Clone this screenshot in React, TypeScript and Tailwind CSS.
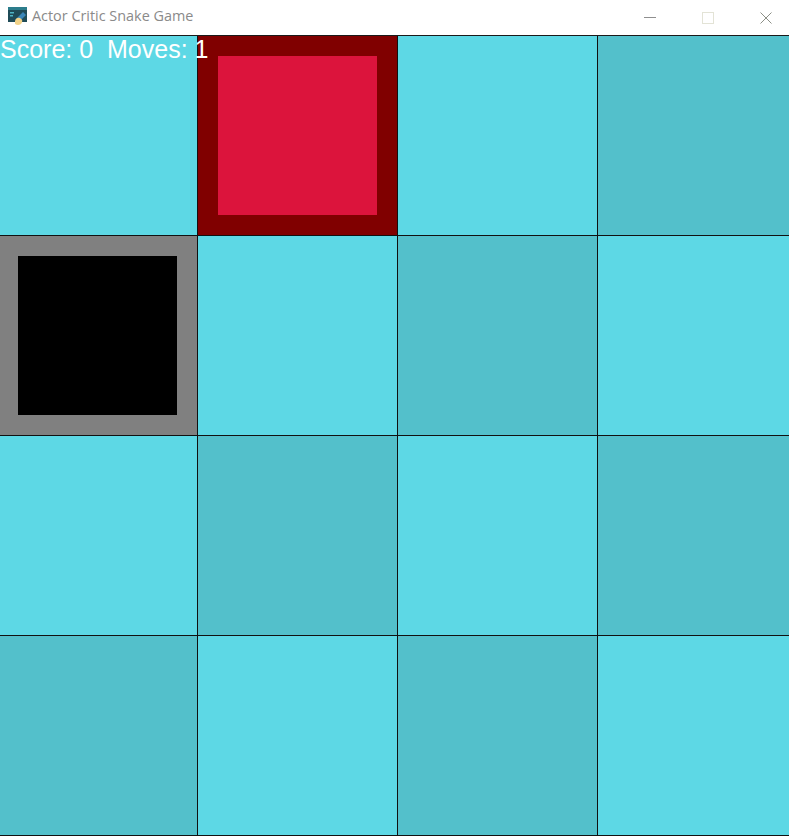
import React from "react";

const ROWS = 4;
const COLS = 4;

type CellKind = "empty" | "head" | "food";

const special: Record<string, CellKind> = {
  "0-1": "head",
  "1-0": "food",
};

function Cell({ row, col }: { row: number; col: number }) {
  const kind = special[`${row}-${col}`] ?? "empty";
  const dark = (row + col) % 2 === 1;

  if (kind === "head") {
    return (
      <div className="flex h-[200px] w-[200px] shrink-0 items-center justify-center border-r border-b border-[#111] bg-[#800000]">
        <div className="h-[159px] w-[159px] bg-[#dc143c]" />
      </div>
    );
  }
  if (kind === "food") {
    return (
      <div className="flex h-[200px] w-[200px] shrink-0 items-center justify-center border-r border-b border-[#111] bg-[#808080]">
        <div className="h-[159px] w-[159px] bg-black" />
      </div>
    );
  }
  return (
    <div
      className={
        dark
          ? "h-[200px] w-[200px] shrink-0 border-r border-b border-[#111] bg-[#53c0cb]"
          : "h-[200px] w-[200px] shrink-0 border-r border-b border-[#111] bg-[#5dd8e5]"
      }
    />
  );
}

function AppIcon() {
  return (
    <svg width="20" height="20" viewBox="0 0 20 20">
      <rect x="0" y="1" width="19" height="15" fill="#1f4b57" />
      <rect x="0" y="1" width="19" height="3" fill="#2c7d8c" />
      <rect x="2" y="6" width="4" height="1.5" fill="#4fb3c4" />
      <rect x="2" y="9" width="3" height="1.5" fill="#4fb3c4" />
      <path d="M9 12 L15 6 L18 9 L12 15 Z" fill="#3a86b8" />
      <path d="M7 15 Q8 11 12 12 Q16 14 13 18 Q10 20 7 18 Z" fill="#f1d38a" />
    </svg>
  );
}

export default function App() {
  return (
    <div className="h-[836px] w-[789px] overflow-hidden bg-white">
      <div className="flex h-[36px] items-center border-b border-[#1a1a1a] bg-white">
        <div className="ml-[8px] mt-[-3px]">
          <AppIcon />
        </div>
        <span className="ml-[4px] mt-[-3px] font-['Open_Sans','Noto_Sans',sans-serif] text-[14.4px] text-[#8a8a8a]">
          Actor Critic Snake Game
        </span>
        <div className="ml-auto flex items-center">
          <div className="flex h-[30px] w-[46px] items-center justify-center">
            <div className="mt-[-1px] h-px w-[12px] bg-[#8f8f8f]" />
          </div>
          <div className="ml-[12px] flex h-[30px] w-[46px] items-center justify-center">
            <div className="h-[12px] w-[12px] border border-[#e3e3d6]" />
          </div>
          <div className="ml-[12px] flex h-[30px] w-[46px] items-center justify-center">
            <svg width="12" height="12" viewBox="0 0 12 12">
              <path d="M0.5 0.5 L11.5 11.5 M11.5 0.5 L0.5 11.5" stroke="#8c8f86" strokeWidth="1" />
            </svg>
          </div>
        </div>
      </div>
      <div className="relative">
        <div className="ml-[-2px] flex flex-col">
          {Array.from({ length: ROWS }).map((_, r) => (
            <div key={r} className="flex">
              {Array.from({ length: COLS }).map((_, c) => (
                <Cell key={c} row={r} col={c} />
              ))}
            </div>
          ))}
        </div>
        <div className="absolute left-0 top-[1px] font-['Liberation_Sans',Arial,sans-serif] text-[25px] leading-none whitespace-pre text-white">
          {"Score: 0  Moves: 1"}
        </div>
      </div>
    </div>
  );
}
